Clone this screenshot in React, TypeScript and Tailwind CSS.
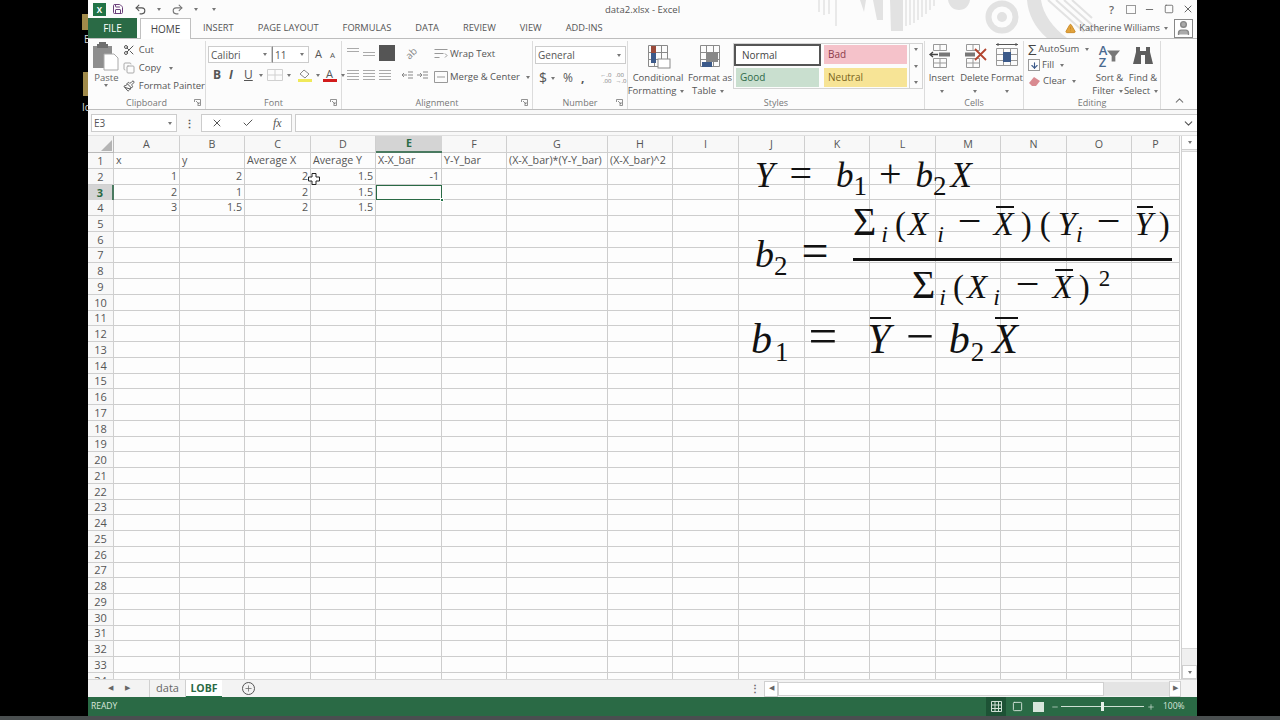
import { Copy, Paintbrush, Scissors, Save, Undo2, Redo2, X, Check, ChevronUp, ChevronDown, Plus, Minus, Square, ArrowDown, AlertTriangle, User } from 'lucide-react';
import type { ReactNode } from 'react';

const ui = "font-['Open_Sans',sans-serif]";
const columns = [
  ['A', 66], ['B', 65], ['C', 66], ['D', 65], ['E', 66], ['F', 65], ['G', 101], ['H', 65],
  ['I', 66], ['J', 66], ['K', 65], ['L', 66], ['M', 65], ['N', 66], ['O', 65], ['P', 48],
] as const;

const rows: Record<number, Record<string, string>> = {
  1: { A: 'x', B: 'y', C: 'Average X', D: 'Average Y', E: 'X-X_bar', F: 'Y-Y_bar', G: '(X-X_bar)*(Y-Y_bar)', H: '(X-X_bar)^2' },
  2: { A: '1', B: '2', C: '2', D: '1.5', E: '-1' },
  3: { A: '2', B: '1', C: '2', D: '1.5' },
  4: { A: '3', B: '1.5', C: '2', D: '1.5' },
};

function Caret() {
  return <span className="inline-block w-0 h-0 border-x-[2px] border-x-transparent border-t-[3px] border-t-[#777] mx-1 align-middle" />;
}

function Launcher() {
  return (
    <svg width="7" height="7" viewBox="0 0 7 7" className="absolute right-1 bottom-[3px] text-[#777]" fill="none" stroke="currentColor">
      <path d="M.5 3V.5H6.500V6.500H3.500M2 2l3 3M5 3v2H3" strokeWidth=".8" />
    </svg>
  );
}

function Group({ label, width, launcher, children }: { label: string; width: number; launcher?: boolean; children: ReactNode }) {
  return (
    <div className="relative shrink-0 h-full border-r border-[#dcdcdc] flex flex-col" style={{ width }}>
      <div className="flex-1 min-h-0 flex">{children}</div>
      <div className="h-[12px] text-center text-[9px] leading-[11px] text-[#777]">{label}</div>
      {launcher && <Launcher />}
    </div>
  );
}

function GridGlyph({ size = 26, children }: { size?: number; children?: ReactNode }) {
  return (
    <svg width={size} height={size} viewBox="0 0 26 26" fill="none" stroke="#8a8a8a" strokeWidth="1">
      <path d="M3.500 2.500h19v21h-19zM3.500 9.500h19M3.500 16.500h19M9.500 2.500v21M16.500 2.500v21" />
      {children}
    </svg>
  );
}

function BigButton({ lines, width, icon }: { lines: ReactNode[]; width: number; icon: ReactNode }) {
  return (
    <div className="shrink-0 flex flex-col items-center text-[9.500px] leading-[13px] text-[#555]" style={{ width }}>
      <div className="h-[32px] flex items-center justify-center">{icon}</div>
      {lines.map((line, i) => (
        <div key={i} className="whitespace-nowrap">{line}</div>
      ))}
    </div>
  );
}

function CellsIcon({ children }: { children: ReactNode }) {
  return (
    <svg width="28" height="26" viewBox="0 0 28 26" fill="none" stroke="#999" strokeWidth="1">
      <path d="M5.500 1.500h13v6h-13zM12 1.500v6M5.500 15.500h13v9h-13zM5.500 20h13M12 15.500v9" />
      {children}
    </svg>
  );
}

function AlignIcon({ d = 'M1 1.500h12M1 4.500h12M1 7.500h12M1 10.500h12' }: { d?: string }) {
  return (
    <svg width="14" height="12" viewBox="0 0 14 12" stroke="#aaa" strokeWidth="1">
      <path d={d} />
    </svg>
  );
}

function PasteIcon() {
  return (
    <svg width="28" height="30" viewBox="0 0 28 30">
      <path d="M1 5h19v22H1z" fill="#8e8e8e" />
      <path d="M7 3h7V1H7zM5 3h11v4H5z" fill="#6e6e6e" />
      <path d="M12 13h10l4 4v12H12z" fill="#fff" stroke="#aaa" />
    </svg>
  );
}

function Ribbon() {
  return (
    <div className="h-[72px] flex bg-[#fcfcfc] border-y border-[#bdbdbd] pt-[2px] shrink-0">
      <Group label="Clipboard" width={118} launcher>
        <div className="w-[33px] ml-[4px] flex flex-col items-center text-[9.500px] text-[#666]">
          <PasteIcon />
          <span className="mt-[1px] leading-3">Paste</span>
          <Caret />
        </div>
        <div className="flex flex-col text-[9.500px] leading-[18px] text-[#555] ml-0.5 whitespace-nowrap">
          <div className="flex items-center gap-1"><Scissors size={12} />Cut</div>
          <div className="flex items-center gap-1"><Copy size={12} className="text-[#aaa]" />Copy<Caret /></div>
          <div className="flex items-center gap-1"><Paintbrush size={12} />Format Painter</div>
        </div>
      </Group>

      <Group label="Font" width={136} launcher>
        <div className="pl-0.5 pt-[5px] flex flex-col gap-[5px]">
          <div className="flex items-center text-[10px] text-[#555]">
            <div className="w-[64px] h-[17px] border border-[#ccc] bg-white flex items-center justify-between pl-0.5 leading-none">Calibri<Caret /></div>
            <div className="w-[37px] h-[17px] border border-[#ccc] border-l-[#888] bg-white flex items-center justify-between pl-0.5 leading-none">11<Caret /></div>
            <span className="ml-1.5 text-[11px]">A</span>
            <span className="ml-2 text-[8px]">A</span>
          </div>
          <div className="flex items-center text-[12px] text-[#555] pl-[5px] h-[14px]">
            <b className="w-[16px]">B</b>
            <i className="w-[15px] font-bold">I</i>
            <u className="w-[11px]">U</u>
            <Caret />
            <svg width="16" height="12" viewBox="0 0 16 12" stroke="#d0d0d0" fill="none"><path d="M.5.5h15v11H.5zM.5 6h15M8 .5v11" /></svg>
            <Caret />
            <div className="w-[15px] flex flex-col items-center leading-none ml-[2px]">
              <svg width="13" height="10" viewBox="0 0 13 10" stroke="#888" fill="none"><path d="M6 1l5 4-4 4-5-4z" /></svg>
              <div className="w-[14px] h-[3px] bg-[#f0e95a]" />
            </div>
            <div className="w-[8px]"><Caret /></div>
            <div className="w-[15px] flex flex-col items-center leading-none text-[11px] ml-[2px]">
              <span className="h-[11px]">A</span>
              <div className="w-[14px] h-[3px] bg-[#d21c1c]" />
            </div>
            <div className="w-[8px]"><Caret /></div>
          </div>
        </div>
      </Group>

      <Group label="Alignment" width={191} launcher>
        <div className="pl-1 pt-[4px] flex">
          <div className="flex flex-col gap-[7px] w-[88px]">
            <div className="flex items-center gap-[2px] h-[16px]">
              <AlignIcon d="M1 1.500h12M1 4.500h12" />
              <AlignIcon d="M1 5.500h12M1 8.500h12" />
              <div className="w-4 h-4 bg-[#555] ml-[1px]" />
              <span className="ml-2 text-[10px] text-[#888] -rotate-45 leading-none">ab</span>
            </div>
            <div className="flex items-center gap-[2px] h-[14px]">
              <AlignIcon /><AlignIcon /><AlignIcon />
              <svg width="26" height="10" viewBox="0 0 26 10" fill="none" stroke="#888" className="ml-2">
                <path d="M0 5h5M2 3L0 5l2 2M6 2h5M6 5h5M6 8h5M15 5h5M18 3l2 2-2 2M21 2h5M21 5h5M21 8h5" />
              </svg>
            </div>
          </div>
          <div className="flex flex-col gap-[7px] text-[9.500px] leading-4 text-[#555] whitespace-nowrap pl-0 pt-[1px]">
            <div className="flex items-center gap-0.5">
              <svg width="14" height="12" viewBox="0 0 14 12" fill="none" stroke="#999"><path d="M.5 1.500h13M.5 5.500h9M.5 9.500h5M11 5.500l2 2-2 2" /></svg>
              Wrap Text
            </div>
            <div className="flex items-center gap-0.5">
              <svg width="14" height="12" viewBox="0 0 14 12" fill="none" stroke="#999"><path d="M.5.5h13v11H.5zM3 6h8" /></svg>
              Merge &amp; Center<Caret />
            </div>
          </div>
        </div>
      </Group>

      <Group label="Number" width={95} launcher>
        <div className="pl-0.5 pt-[5px] flex flex-col gap-[6px] text-[#555]">
          <div className="w-[91px] h-[18px] border border-[#ccc] bg-white flex items-center justify-between pl-0.5 text-[10px]">General<Caret /></div>
          <div className="flex items-center text-[12px] pl-1 leading-4">
            <span className="text-[14px]">$</span><Caret />
            <span className="ml-1">%</span>
            <b className="ml-2">,</b>
            <span className="ml-4 text-[6px] leading-[6px] text-[#777] text-right">←.0<br />.00</span>
            <span className="ml-1 text-[6px] leading-[6px] text-[#777]">.00<br />→.0</span>
          </div>
        </div>
      </Group>

      <Group label="Styles" width={297}>
        <BigButton width={60} lines={['Conditional', <>Formatting<Caret /></>]} icon={
          <GridGlyph>
            <rect x="6" y="3" width="5" height="7" fill="#9a4a3a" stroke="none" />
            <rect x="6" y="10" width="5" height="10" fill="#3c5a8a" stroke="none" />
            <rect x="13" y="16" width="12" height="9" fill="#fff" />
          </GridGlyph>
        } />
        <BigButton width={44} lines={['Format as', <>Table<Caret /></>]} icon={
          <GridGlyph>
            <rect x="9" y="9" width="12" height="10" fill="#888" stroke="none" />
            <rect x="5" y="19" width="10" height="5" fill="#3c5a8a" stroke="none" />
          </GridGlyph>
        } />
        <div className="ml-[1px] mt-[2px] w-[190px] h-[46px] border border-[#d4d4d4] flex text-[10px] text-[#444]">
          <div className="w-[175px] grid grid-cols-[87px_83px] gap-x-[3px] gap-y-[2px] content-start">
            <div className="h-[22px] border-[2px] border-[#555] bg-white flex items-center pl-1.5">Normal</div>
            <div className="h-[19px] mt-[1px] bg-[#f5c2ca] flex items-center pl-1 text-[#8c3a4a]">Bad</div>
            <div className="h-[19px] mx-[2px] bg-[#c9dfcf] flex items-center pl-1 text-[#2f6a48]">Good</div>
            <div className="h-[19px] bg-[#f7e496] flex items-center pl-1 text-[#7a6420]">Neutral</div>
          </div>
          <div className="w-[13px] ml-auto border-l border-[#d4d4d4] flex flex-col items-center justify-between py-1"><Caret /><Caret /><Caret /></div>
        </div>
      </Group>

      <Group label="Cells" width={99}>
        <BigButton width={33} lines={['Insert', <Caret key="c" />]} icon={
          <CellsIcon><path d="M2 11.500h8M5 9l-3 2.500L5 14" stroke="#444" strokeWidth="1.300" /><path d="M11 11.500h11" stroke="#777" strokeWidth="4" /></CellsIcon>
        } />
        <BigButton width={33} lines={['Delete', <Caret key="c" />]} icon={
          <CellsIcon><path d="M4 11.500h10" stroke="#777" strokeWidth="4" /><path d="M14 6l11 11M25 6L14 17" stroke="#b2452f" strokeWidth="1.800" /></CellsIcon>
        } />
        <BigButton width={32} lines={['Format', <Caret key="c" />]} icon={
          <svg width="26" height="26" viewBox="0 0 26 26" fill="none" stroke="#999">
            <path d="M2 1.500h22M4 0v3M22 0v3" stroke="#555" />
            <path d="M2.500 5.500h21v17h-21zM9.500 5.500v17M16.500 5.500v17M2.500 11.500h21M2.500 17.500h21" />
            <rect x="9" y="9" width="8" height="10" fill="#3c5a8a" stroke="none" />
          </svg>
        } />
      </Group>

      <Group label="Editing" width={137}>
        <div className="flex flex-col text-[9.500px] leading-4 text-[#555] pl-1 gap-0 w-[69px] whitespace-nowrap">
          <div className="flex items-center gap-[2px]"><span className="w-[13px] text-center text-[15px] leading-4 text-[#444]">Σ</span>AutoSum<Caret /></div>
          <div className="flex items-center gap-[2px]"><span className="w-[12px] h-[12px] border border-[#999] flex items-center justify-center"><ArrowDown size={9} strokeWidth={3} className="text-[#3c5a8a]" /></span>Fill<Caret /></div>
          <div className="flex items-center gap-[2px]">
            <svg width="13" height="11" viewBox="0 0 13 11"><path d="M1 7l5-6 6 4-4 5H4z" fill="#d98a90" /></svg>
            Clear<Caret />
          </div>
        </div>
        <BigButton width={33} lines={['Sort &', <>Filter<Caret /></>]} icon={
          <div className="flex items-center text-[#4a6a90] text-[13px] leading-[12px] font-semibold">
            <span>A<br />Z</span>
            <svg width="13" height="14" viewBox="0 0 14 14" fill="#777"><path d="M0 1h14L9 7v6H5V7z" /></svg>
          </div>
        } />
        <BigButton width={34} lines={['Find &', <>Select<Caret /></>]} icon={
          <svg width="24" height="22" viewBox="0 0 24 20" fill="#5e5e5e"><path d="M5 1h4v4h6V1h4v5l3 12h-8V9h-4v9H2L5 6z" /></svg>
        } />
      </Group>

      <div className="flex-1 flex items-end justify-center pb-[2px] text-[#777]"><ChevronUp size={13} /></div>
    </div>
  );
}

function TitleBackdrop() {
  return (
    <svg width="397" height="38" viewBox="0 0 397 38" className="absolute right-0 top-0" fill="none" stroke="#e2e2e2">
      <path d="M19 0v12M24 0v15M29 0v14M36 0v26" strokeWidth="1.500" />
      <path d="M60 0l4 12 2-12z" fill="#e2e2e2" strokeWidth="0" />
      <path d="M73 0h10v20H77zM90 0h13v31H91z" fill="#e2e2e2" strokeWidth="0" />
      <path d="M106 0v26M110 0v25M114 0v23M118 0v20M122 0v17M126 0v14M130 0v10M134 0v6" strokeWidth="1.500" />
      <path d="M148 0h22c-1 6-5 10-11 10s-10-4-11-10z" fill="#e2e2e2" strokeWidth="0" />
      <circle cx="202" cy="17" r="13.500" strokeWidth="6" />
      <circle cx="202" cy="17" r="5" fill="#e2e2e2" strokeWidth="0" />
      <path d="M227 0h14c2 14 12 28 26 38h-20c-12-10-19-24-20-38z" fill="#e2e2e2" strokeWidth="0" />
      <path d="M248 0l36 32M256 0l36 32M264 0l36 32M272 0l20 18" strokeWidth="2" />
    </svg>
  );
}

function Grid() {
  const template = `26px ${columns.map(([, w]) => `${w}px`).join(' ')}`;
  const numbers = Array.from({ length: 34 }, (_, i) => i + 1);
  return (
    <div className="flex-1 min-h-0 overflow-hidden relative bg-[#fdfdfd]">
      <div className="grid grid-rows-[17px] text-[10.700px] leading-none text-[#555] w-max" style={{ gridTemplateColumns: template, gridAutoRows: '15.75px' }}>
        <div className="bg-[#f4f4f4] border-b border-r border-[#b9b9b9] flex items-end justify-end pr-[1px] pb-[1px]">
          <div className="w-0 h-0 border-l-[11px] border-l-transparent border-b-[11px] border-b-[#b4b4b4]" />
        </div>
        {columns.map(([c]) => (
          <div key={c} className={c === 'E' ? 'bg-[#d4d4d4] border-b-2 border-[#4a7a60] text-[#2a6a45] font-bold flex items-center justify-center' : 'bg-[#f8f8f8] border-b border-r border-[#cfcfcf] flex items-center justify-center'}>{c}</div>
        ))}
        {numbers.map((n) => (
          <div key={n} className="contents">
            <div className={n === 3 ? 'bg-[#d4d4d4] border-r-2 border-[#4a7a60] text-[#2a6a45] font-bold flex items-center justify-center text-[11px]' : 'bg-[#f8f8f8] border-b border-r border-[#cfcfcf] flex items-center justify-center text-[11px]'}>{n}</div>
            {columns.map(([c]) => {
              const text = rows[n]?.[c];
              const numeric = text !== undefined && /^-?[\d.]+$/.test(text);
              const active = n === 3 && c === 'E';
              return (
                <div key={c} className={`relative flex items-center whitespace-nowrap px-[2px] ${numeric ? 'justify-end' : ''} ${active ? 'outline-[1.500px] -outline-offset-1 outline-[#2a6a45] z-10' : 'border-b border-r border-[#cdcdcd]'}`}>
                  {text}
                  {active && <span className="absolute -right-[2px] -bottom-[2px] w-[4px] h-[4px] bg-[#217346] border border-white" />}
                </div>
              );
            })}
          </div>
        ))}
      </div>

      {/* pasted equation picture and the mouse cursor sit over the cells */}
      <div className="absolute left-[652px] top-[17px] w-[440px] font-['Liberation_Serif',serif] text-[#111] italic leading-none whitespace-nowrap pointer-events-none">
        <div className="h-[58px] pt-[3px] pl-[15px] text-[35px] leading-[40px]">
          Y<Op className="text-[40px] ml-[15px]">=</Op><span className="ml-[24px]">b</span><Sub>1</Sub><Op className="text-[40px] ml-[12px]">+</Op><span className="ml-[14px]">b</span><Sub>2</Sub><span className="ml-[4px]">X</span>
        </div>
        <div className="h-[86px] flex items-center pl-[15px]">
          <div className="w-[98px] text-[38px] leading-none">b<Sub>2</Sub><Op className="text-[48px] ml-[14px]">=</Op></div>
          <div className="w-[319px] text-[33px]">
            <div className="h-[40px] leading-[30px] pb-[10px] border-b-[3px] box-content border-[#111]">
              <Op className="text-[40px]">Σ</Op><Idx className="ml-[5px]">i</Idx><Op className="ml-[7px]">(</Op><span className="ml-[2px]">X</span><Idx className="ml-[9px]">i</Idx>
              <Op className="text-[42px] ml-[14px]">−</Op><Bar className="ml-[12px]">X</Bar><Op className="ml-[7px]">)</Op><Op className="ml-[8px]">(</Op><span className="ml-[7px]">Y</span><Idx>i</Idx>
              <Op className="text-[42px] ml-[14px]">−</Op><Bar className="ml-[14px]">Y</Bar><Op className="ml-[6px]">)</Op>
            </div>
            <div className="h-[40px] leading-[30px] pt-[10px] pl-[59px]">
              <Op className="text-[40px]">Σ</Op><Idx className="ml-[4px]">i</Idx><Op className="ml-[7px]">(</Op><span className="ml-[3px]">X</span><Idx className="ml-[6px]">i</Idx>
              <Op className="text-[42px] ml-[16px]">−</Op><Bar className="ml-[13px]">X</Bar><Op className="ml-[6px]">)</Op><Op className="text-[23px] relative -top-[12px] ml-[9px]">2</Op>
            </div>
          </div>
        </div>
        <div className="pt-[21px] pl-[11px] text-[42px] leading-none">
          b<Sub className="ml-[3px]">1</Sub><Op className="text-[51px] ml-[20px]">=</Op><Bar className="ml-[30px]">Y</Bar><Op className="text-[50px] ml-[15px]">−</Op><span className="ml-[15px]">b</span><Sub className="ml-[1px]">2</Sub><Bar className="ml-[8px]">X</Bar>
        </div>
      </div>
      <svg width="12" height="12" viewBox="0 0 12 12" className="absolute left-[220px] top-[37px]" fill="#fff" stroke="#222"><path d="M4 .5h4v3.500h3.500v4H8v3.500H4V8H.5V4H4z" /></svg>
    </div>
  );
}

function Op({ className = '', children }: { className?: string; children: ReactNode }) {
  return <span className={`not-italic leading-[0] ${className}`}>{children}</span>;
}

function Sub({ className = '', children }: { className?: string; children: ReactNode }) {
  return <span className={`not-italic text-[27px] leading-[0] relative top-[8px] ${className}`}>{children}</span>;
}

function Idx({ className = '', children }: { className?: string; children: ReactNode }) {
  return <span className={`text-[24px] leading-[0] relative top-[7px] ${className}`}>{children}</span>;
}

function Bar({ className = '', children }: { className?: string; children: ReactNode }) {
  return (
    <span className={`relative inline-block leading-none ${className}`}>
      {children}
      <span className="absolute left-[3px] right-0 bottom-[0.98em] h-[2px] bg-[#111]" />
    </span>
  );
}

export default function App() {
  const tabs = ['INSERT', 'PAGE LAYOUT', 'FORMULAS', 'DATA', 'REVIEW', 'VIEW', 'ADD-INS'];
  return (
    <div className={`w-[1280px] h-[720px] bg-black flex flex-col overflow-hidden ${ui}`}>
      <div className="flex-1 min-h-0 flex">
        <div className="w-[88px] shrink-0 relative text-[10px] text-[#ddd]">
          <div className="absolute right-0 top-[14px] w-[6px] h-[16px] bg-[#a08a4a]" />
          <div className="absolute right-0 top-[72px] w-[5px] h-[24px] bg-[#a08a4a]" />
          <span className="absolute left-[84px] top-[32px]">E</span>
          <span className="absolute left-[82px] top-[100px]">Ic</span>
        </div>

        <div className="w-[1109px] shrink-0 flex flex-col bg-white">
          <div className="h-[38px] relative shrink-0 bg-[#fcfcfc]">
            <TitleBackdrop />
            <div className="h-[18px] flex items-center relative px-[5px] gap-1.5 text-[#666]">
              <div className="w-[13px] h-[13px] bg-[#217346] text-white text-[8px] leading-[13px] text-center font-bold">X</div>
              <Save size={12} className="text-[#6a3d7a]" />
              <Undo2 size={13} className="text-[#555] ml-1" /><Caret />
              <Redo2 size={13} className="text-[#777]" /><Caret />
              <Caret />
              <span className="absolute left-[517px] top-[3px] text-[9.500px] text-[#555]">data2.xlsx - Excel</span>
            </div>
            <div className="absolute right-0 top-0 h-[18px] flex items-center text-[#666]">
              <span className="w-[19px] text-center text-[11px] font-semibold leading-none">?</span>
              <span className="w-[19px] flex justify-center"><span className="w-[10px] h-[9px] border border-[#999]" /></span>
              <span className="w-[19px] flex justify-center"><Minus size={11} /></span>
              <span className="w-[19px] flex justify-center"><Square size={10} /></span>
              <span className="w-[19px] flex justify-center"><X size={12} /></span>
            </div>
            <div className="h-[20px] flex items-end relative text-[9.300px] text-[#555]">
              <div className="w-[49px] h-[20px] bg-[#2a6a45] text-white text-[10px] flex items-center justify-center">FILE</div>
              <div className="w-[51px] h-[21px] ml-[3px] bg-white border border-b-0 border-[#c0c0c0] text-[10px] text-[#444] flex items-center justify-center relative top-[1px] z-10">HOME</div>
              <div className="flex items-center gap-[24px] pl-[12px] h-full whitespace-nowrap">
                {tabs.map((t) => <span key={t}>{t}</span>)}
              </div>
              <div className="ml-auto flex items-center h-full pr-[4px] text-[#555]">
                <AlertTriangle size={11} fill="#e2a33c" className="text-[#c98a2a] mr-[3px]" />
                Katherine Williams<Caret />
                <div className="ml-[2px] w-[19px] h-[19px] border border-[#888] flex items-end justify-center overflow-hidden bg-white"><User size={18} fill="#aaa" className="text-[#888]" /></div>
              </div>
            </div>
          </div>

          <Ribbon />

          <div className="h-[26px] shrink-0 flex items-center pl-[3px] pt-[1px] bg-[#f8f8f8] border-b border-[#e0e0e0] text-[#555]">
            <div className="w-[86px] h-[18px] border border-[#ccc] bg-white flex items-center justify-between pl-0.5 text-[10px]">E3<Caret /></div>
            <span className="w-[24px] text-center text-[11px] leading-none font-bold">⋮</span>
            <div className="w-[91px] h-[18px] border border-[#ccc] bg-white flex items-center justify-around">
              <X size={12} />
              <Check size={12} />
              <span className="font-['Liberation_Serif',serif] italic text-[12px] leading-none">fx</span>
            </div>
            <div className="flex-1 h-[18px] ml-[3px] border border-[#ccc] border-r-0 bg-white flex items-center justify-end pr-[2px]"><ChevronDown size={13} /></div>
          </div>

          <div className="flex-1 min-h-0 flex">
            <Grid />
            <div className="w-[16px] shrink-0 bg-[#f0f0f0] border-l border-[#d0d0d0] flex flex-col items-center justify-between">
              <div className="w-full h-[14px] bg-white border-b border-[#d0d0d0] flex items-center justify-center"><Caret /></div>
              <div className="w-full flex-1 mt-[1px] bg-white border-y border-[#d8d8d8] mb-[16px]" />
              <div className="w-full h-[14px] bg-white border border-[#d0d0d0] flex items-center justify-center"><Caret /></div>
            </div>
          </div>

          <div className="h-[18px] shrink-0 flex items-center bg-[#f3f3f3] border-t border-[#d8d8d8] text-[#666]">
            <div className="w-[61px] flex items-center justify-center gap-3 text-[7px]"><span>◀</span><span>▶</span></div>
            <div className="h-full w-[37px] border-x border-[#d0d0d0] text-center text-[11px] leading-[16px]">data</div>
            <div className="h-[18px] w-[36px] bg-white border-b-2 border-[#217346] text-center text-[10.500px] leading-[16px] font-bold text-[#2a6a45]">LOBF</div>
            <div className="ml-[20px] w-[13px] h-[13px] rounded-full border border-[#555] flex items-center justify-center"><Plus size={9} /></div>
            <span className="ml-[495px] text-[10px] font-bold">⋮</span>
            <div className="ml-[4px] w-[14px] h-[16px] bg-white border border-[#d0d0d0] flex items-center justify-center text-[7px]">◀</div>
            <div className="w-[326px] h-[14px] bg-white border border-[#d0d0d0]" />
            <div className="flex-1 h-[14px] bg-[#e4e4e4]" />
            <div className="w-[12px] h-[16px] bg-white border border-[#d0d0d0] flex items-center justify-center text-[7px] mr-[16px]">▶</div>
          </div>

          <div className="h-[19px] shrink-0 bg-[#2a6a45] text-[#d8e6dc] flex items-center text-[8.500px] pl-[3px]">
            <span>READY</span>
            <div className="ml-auto flex items-center h-full">
              <div className="w-[20px] h-full bg-[#1d5235] flex items-center justify-center">
                <svg width="11" height="11" viewBox="0 0 11 11" stroke="#cfe0d4" fill="none"><path d="M.5.5h10v10H.5zM.5 4h10M.5 7.500h10M4 .5v10M7.500 .5v10" /></svg>
              </div>
              <div className="w-[22px] flex items-center justify-center"><Square size={11} /></div>
              <div className="w-[20px] flex items-center justify-center"><div className="w-[11px] h-[10px] bg-[#d8e6dc]" /></div>
              <Minus size={8} className="ml-[3px]" />
              <div className="relative w-[83px] h-[1px] bg-[#cfe0d4] ml-[2px] mr-[3px]"><div className="absolute left-[40px] -top-[4px] w-[3px] h-[9px] bg-[#e8f0ea]" /></div>
              <Plus size={8} />
              <span className="ml-[8px] w-[24px] mr-[10px]">100%</span>
            </div>
          </div>
        </div>
      </div>
      <div className="h-[4px] shrink-0 bg-[#4a4f50]" />
    </div>
  );
}
